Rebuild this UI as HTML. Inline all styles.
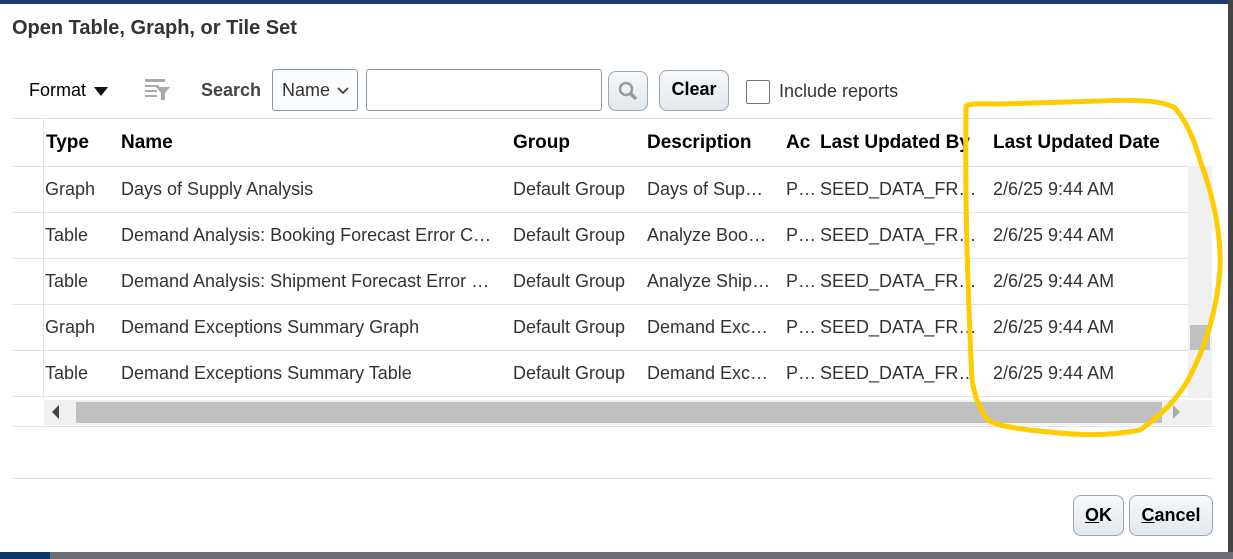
<!DOCTYPE html>
<html><head><meta charset="utf-8"><style>
*{margin:0;padding:0;box-sizing:border-box}
body{width:1233px;height:559px;overflow:hidden;background:#fff;font-family:"Liberation Sans",sans-serif;position:relative;color:#333}
.a{position:absolute}
.t{font-size:18px;white-space:nowrap}
.h{font-size:19px;font-weight:bold;color:#000;white-space:nowrap}
.hl{position:absolute;left:13px;width:1200px;height:1px;background:#dde5ec}
.btn{position:absolute;border:1px solid #9aa6b2;border-radius:8px;background:linear-gradient(#f6f8fa,#e3e8ec);font-weight:bold;font-size:18px;color:#000;text-align:center}
</style></head><body>
<div class="a" style="left:0;top:0;width:1233px;height:4px;background:#1e3a6e"></div>
<div class="a" style="left:1228px;top:0;width:5px;height:559px;background:#444"></div>
<div class="a" style="left:0;top:552px;width:1233px;height:7px;background:#6b6e72"></div>
<div class="a" style="left:0;top:552px;width:50px;height:7px;background:#0b3a6a"></div>
<div class="a" style="left:12px;top:17px;font-size:20px;font-weight:bold;color:#333">Open Table, Graph, or Tile Set</div>

<div class="a t" style="left:29px;top:80px;color:#000">Format</div>
<svg class="a" style="left:94px;top:87px" width="14" height="10"><path d="M0 0h14L7 9z" fill="#111"/></svg>
<svg class="a" style="left:145px;top:78px" width="26" height="24"><g fill="#aaa"><rect x="0" y="1" width="20" height="3"/><rect x="0" y="7" width="14" height="2"/><rect x="0" y="12" width="12" height="2"/><rect x="0" y="17" width="12" height="2"/><path d="M11 9h14l-5 6v7h-4v-7z"/></g></svg>
<div class="a t" style="left:201px;top:80px;font-weight:bold;color:#444">Search</div>
<div class="a" style="left:272px;top:69px;width:86px;height:42px;border:1px solid #8a96a3;border-radius:3px;background:#fafcfd"><span class="t" style="position:absolute;left:9px;top:10px;color:#333">Name</span><svg style="position:absolute;left:64px;top:17px" width="12" height="8"><path d="M1 1l5 5 5-5" stroke="#333" stroke-width="1.6" fill="none"/></svg></div>
<div class="a" style="left:366px;top:69px;width:236px;height:42px;border:1px solid #8a96a3;border-radius:3px;background:#fff"></div>
<div class="btn" style="left:608px;top:71px;width:40px;height:40px"><svg style="margin-top:9px" width="20" height="20"><circle cx="8" cy="8" r="6" stroke="#999" stroke-width="2.5" fill="none"/><path d="M12 12l6 6" stroke="#999" stroke-width="3.5"/></svg></div>
<div class="btn" style="left:659px;top:70px;width:70px;height:41px;line-height:36px">Clear</div>
<div class="a" style="left:746px;top:80px;width:24px;height:24px;border:1px solid #6e7a86;border-radius:2px"></div>
<div class="a t" style="left:779px;top:81px;color:#333">Include reports</div>

<div class="hl" style="top:118px"></div>
<div class="a" style="left:43px;top:118px;width:1px;height:280px;background:#dde5ec"></div>
<div class="a h" style="left:46px;top:132px">Type</div>
<div class="a h" style="left:121px;top:132px">Name</div>
<div class="a h" style="left:513px;top:132px">Group</div>
<div class="a h" style="left:647px;top:132px">Description</div>
<div class="a h" style="left:786px;top:132px;width:28px;overflow:hidden">Ac</div>
<div class="a h" style="left:820px;top:132px">Last Updated By</div>
<div class="a h" style="left:993px;top:132px">Last Updated Date</div>
<div class="hl" style="top:166px"></div>
<div class="hl" style="top:212px"></div>
<div class="hl" style="top:258px"></div>
<div class="hl" style="top:304px"></div>
<div class="hl" style="top:350px"></div>
<div class="hl" style="top:396px"></div>

<div class="a t" style="left:45px;top:179px">Graph</div><div class="a t" style="left:121px;top:179px">Days of Supply Analysis</div><div class="a t" style="left:513px;top:179px">Default Group</div><div class="a t" style="left:647px;top:179px">Days of Sup…</div><div class="a t" style="left:786px;top:179px">P…</div><div class="a t" style="left:820px;top:179px">SEED_DATA_FR…</div><div class="a t" style="left:993px;top:179px">2/6/25 9:44 AM</div>
<div class="a t" style="left:45px;top:225px">Table</div><div class="a t" style="left:121px;top:225px">Demand Analysis: Booking Forecast Error C…</div><div class="a t" style="left:513px;top:225px">Default Group</div><div class="a t" style="left:647px;top:225px">Analyze Boo…</div><div class="a t" style="left:786px;top:225px">P…</div><div class="a t" style="left:820px;top:225px">SEED_DATA_FR…</div><div class="a t" style="left:993px;top:225px">2/6/25 9:44 AM</div>
<div class="a t" style="left:45px;top:271px">Table</div><div class="a t" style="left:121px;top:271px">Demand Analysis: Shipment Forecast Error …</div><div class="a t" style="left:513px;top:271px">Default Group</div><div class="a t" style="left:647px;top:271px">Analyze Ship…</div><div class="a t" style="left:786px;top:271px">P…</div><div class="a t" style="left:820px;top:271px">SEED_DATA_FR…</div><div class="a t" style="left:993px;top:271px">2/6/25 9:44 AM</div>
<div class="a t" style="left:45px;top:317px">Graph</div><div class="a t" style="left:121px;top:317px">Demand Exceptions Summary Graph</div><div class="a t" style="left:513px;top:317px">Default Group</div><div class="a t" style="left:647px;top:317px">Demand Exc…</div><div class="a t" style="left:786px;top:317px">P…</div><div class="a t" style="left:820px;top:317px">SEED_DATA_FR…</div><div class="a t" style="left:993px;top:317px">2/6/25 9:44 AM</div>
<div class="a t" style="left:45px;top:363px">Table</div><div class="a t" style="left:121px;top:363px">Demand Exceptions Summary Table</div><div class="a t" style="left:513px;top:363px">Default Group</div><div class="a t" style="left:647px;top:363px">Demand Exc…</div><div class="a t" style="left:786px;top:363px">P…</div><div class="a t" style="left:820px;top:363px">SEED_DATA_FR…</div><div class="a t" style="left:993px;top:363px">2/6/25 9:44 AM</div>

<div class="a" style="left:1188px;top:166px;width:24px;height:232px;background:#f0f0f0"></div>
<div class="a" style="left:1190px;top:325px;width:20px;height:25px;background:#c0c0c0"></div>
<div class="a" style="left:44px;top:400px;width:1168px;height:25px;background:#f0f0f0"></div>
<div class="a" style="left:76px;top:402px;width:1086px;height:21px;background:#c0c0c0"></div>
<svg class="a" style="left:52px;top:405px" width="8" height="14"><path d="M7 0v14L0 7z" fill="#444"/></svg>
<svg class="a" style="left:1172px;top:405px" width="8" height="14"><path d="M1 0v14l7-7z" fill="#aaa"/></svg>
<div class="hl" style="top:426px"></div>
<div class="hl" style="top:478px"></div>

<div class="btn" style="left:1073px;top:495px;width:51px;height:41px;line-height:38px"><u>O</u>K</div>
<div class="btn" style="left:1129px;top:495px;width:84px;height:41px;line-height:38px"><u>C</u>ancel</div>

<svg class="a" style="left:0;top:0" width="1233" height="559"><path d="M966 106 Q968 103 1000 104 L1100 101 Q1160 98 1175 108 Q1190 125 1200 160 Q1222 220 1220 270 Q1215 330 1188 380 Q1172 408 1140 430 Q1100 438 1050 432 Q1000 428 988 420 Q976 405 972 380 Q970 340 968 280 Q965 200 966 106 Z" stroke="#ffcc00" stroke-width="5" fill="none" stroke-linejoin="round"/></svg>
</body></html>
